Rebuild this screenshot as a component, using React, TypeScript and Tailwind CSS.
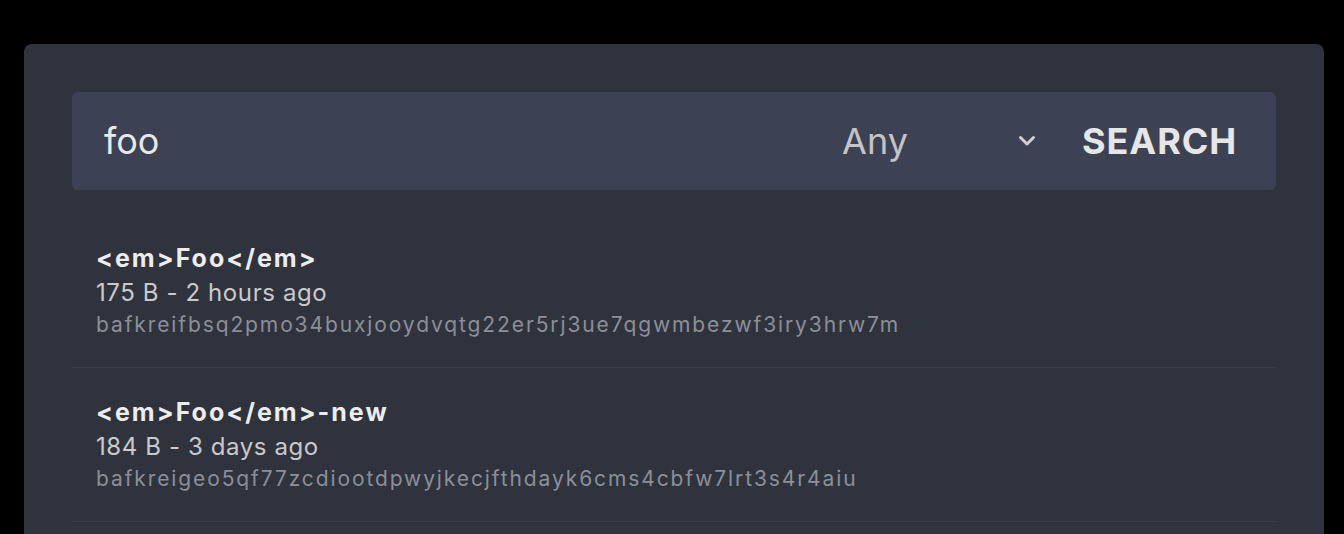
const results = [
  {
    name: "<em>Foo</em>",
    meta: "175 B - 2 hours ago",
    cid: "bafkreifbsq2pmo34buxjooydvqtg22er5rj3ue7qgwmbezwf3iry3hrw7m",
  },
  {
    name: "<em>Foo</em>-new",
    meta: "184 B - 3 days ago",
    cid: "bafkreigeo5qf77zcdiootdpwyjkecjfthdayk6cms4cbfw7lrt3s4r4aiu",
  },
];

function Chevron() {
  return (
    <svg width="18" height="12" viewBox="0 0 18 12" fill="none" className="text-[#cfcfd3]">
      <polyline
        points="2.5,2.5 9,9 15.5,2.5"
        stroke="currentColor"
        strokeWidth="3"
        strokeLinecap="round"
        strokeLinejoin="round"
      />
    </svg>
  );
}

export default function App() {
  return (
    <div className="h-screen overflow-hidden bg-black pt-[44px] pl-6 pr-5 font-['Inter',sans-serif]">
      <div className="h-full bg-[#2f333e] rounded-t-lg px-12 pt-12">
        {/* Search bar */}
        <div className="flex items-center h-[98px] bg-[#3c4253] rounded-md">
          <div className="flex-1 pl-8 text-4xl text-[#e8e8e8]">foo</div>
          <div className="flex items-center w-[194px] text-4xl text-[#c4c4c6]">
            <span className="flex-1">Any</span>
            <Chevron />
          </div>
          <button className="pl-[46px] pr-[39px] text-4xl font-bold tracking-wide text-[#e6e6e6]">
            SEARCH
          </button>
        </div>

        {/* Results */}
        <ul className="mt-6">
          {results.map((r) => (
            <li key={r.cid} className="px-6 pt-7 pb-[26px] border-b border-[#393e4c]">
              <div className="text-[25px] leading-8 font-bold tracking-[0.08em] text-[#ededed]">
                {r.name}
              </div>
              <div className="mt-[3px] text-2xl leading-8 tracking-[0.025em] text-[#cacaca]">
                {r.meta}
              </div>
              <div className="text-[21px] leading-8 tracking-[0.09em] text-[#8c8f97]">
                {r.cid}
              </div>
            </li>
          ))}
        </ul>
      </div>
    </div>
  );
}
